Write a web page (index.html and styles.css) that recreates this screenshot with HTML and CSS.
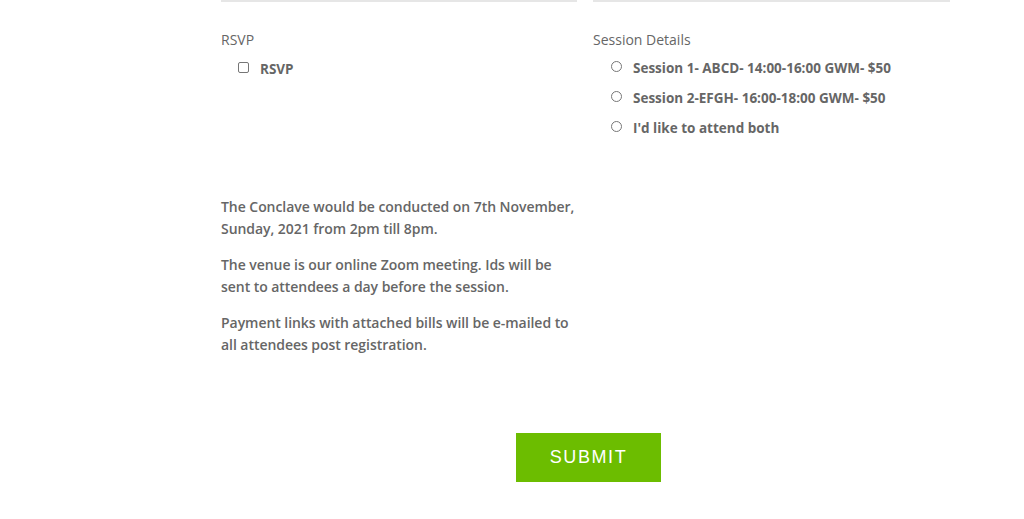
FILE: index.html
```html
<!DOCTYPE html>
<html lang="en">
<head>
<meta charset="utf-8">
<title>Conclave RSVP</title>
<link rel="stylesheet" href="styles.css">
</head>
<body>
<form class="form">
  <div class="fields">
    <div class="col">
      <div class="rule"></div>
      <div class="label">RSVP</div>
      <ul class="options opts-check">
        <li><label class="opt"><input type="checkbox" class="box"><span>RSVP</span></label></li>
      </ul>
    </div>
    <div class="col">
      <div class="rule"></div>
      <div class="label">Session Details</div>
      <ul class="options opts-radio">
        <li><label class="opt"><input type="radio" name="s" class="radio"><span>Session 1- ABCD- 14:00-16:00 GWM- $50</span></label></li>
        <li><label class="opt"><input type="radio" name="s" class="radio"><span>Session 2-EFGH- 16:00-18:00 GWM- $50</span></label></li>
        <li><label class="opt"><input type="radio" name="s" class="radio"><span>I'd like to attend both</span></label></li>
      </ul>
    </div>
  </div>
  <div class="info">
    <p>The Conclave would be conducted on 7th November, Sunday, 2021 from 2pm till 8pm.</p>
    <p>The venue is our online Zoom meeting. Ids will be sent to attendees a day before the session.</p>
    <p>Payment links with attached bills will be e-mailed to all attendees post registration.</p>
  </div>
  <div class="actions">
    <button type="button" class="submit">SUBMIT</button>
  </div>
</form>
</body>
</html>
```

FILE: styles.css
```css
html, body {
  margin: 0;
  padding: 0;
  background: #fff;
}
body {
  font-family: "Open Sans", "Noto Sans", sans-serif;
  color: #666;
  font-size: 14px;
}
.form {
  width: 729px;
  margin-left: 221px;
}
.fields {
  display: grid;
  grid-template-columns: 356px 357px;
  column-gap: 16px;
}
.rule {
  height: 2px;
  background: #e6e6e6;
}
.label {
  margin-top: 28px;
  line-height: 20px;
  font-size: 14px;
  color: #666;
}
.options {
  list-style: none;
  margin: 0;
  padding: 0;
}
.opts-check {
  margin-top: 9px;
  padding-left: 17px;
}
.opts-radio {
  margin-top: 8px;
  padding-left: 18px;
}
.opts-radio li + li {
  margin-top: 10px;
}
.opt {
  display: flex;
  align-items: center;
  gap: 11px;
  line-height: 20px;
  font-size: 13.5px;
  font-weight: 700;
  color: #666;
}
.box, .radio {
  appearance: none;
  -webkit-appearance: none;
  margin: 0;
  width: 11px;
  height: 11px;
  border: 1px solid #767676;
  background: #fff;
  flex: none;
  position: relative;
  top: -2px;
}
.box {
  border-radius: 2px;
}
.radio {
  border-radius: 50%;
}
.info {
  width: 356px;
  margin-top: 58px;
}
.info p {
  margin: 0 0 14px;
  font-weight: 600;
  line-height: 22px;
  font-size: 14px;
  letter-spacing: -0.05px;
  color: #666;
}
.actions {
  margin-top: 77px;
  padding-left: 295px;
}
.submit {
  width: 145px;
  height: 49px;
  border: 0;
  background: #6cbd00;
  color: #fff;
  font-family: "Liberation Sans", Arial, sans-serif;
  font-size: 18px;
  letter-spacing: 1.6px;
  padding: 0;
}
```
